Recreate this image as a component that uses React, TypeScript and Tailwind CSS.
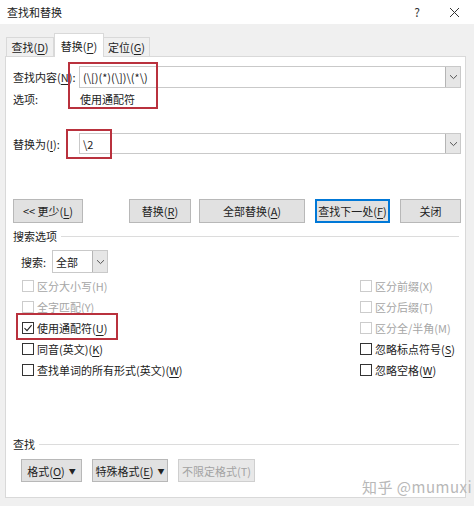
import React from 'react';

const font = { fontFamily: '"Noto Sans CJK SC", "Liberation Sans", sans-serif' };

// access-key letter, underlined like Windows dialogs
const K = ({ c }: { c: string }) => <span className="underline underline-offset-[2px]">{c}</span>;

const Chevron = () => (
   <svg width="9" height="6" viewBox="0 0 9 6" fill="none">
      <path d="M1 1.2 L4.5 4.6 L8 1.2" stroke="#555" strokeWidth="1" />
   </svg>
);

const Combo = ({ value }: { value: string }) => (
   <div className="flex-1 h-full flex items-stretch border border-[#c9c9c9] bg-white">
      <div className="flex-1 flex items-center pl-[3px] text-[#222]">{value}</div>
      <div className="w-[15px] flex items-center justify-center bg-[#e6e6e6] border-l border-[#b5b5b5]">
         <Chevron />
      </div>
   </div>
);

type BtnProps = { children: React.ReactNode; className?: string; disabled?: boolean; primary?: boolean };

const Btn = ({ children, className = '', disabled, primary }: BtnProps) => (
   <div
      className={
         'h-full flex items-center justify-center whitespace-nowrap border ' +
         (primary ? 'bg-[#e1e1e1] border-[#0078d7] shadow-[inset_0_0_0_1px_#0078d7] ' : '') +
         (disabled ? 'text-[#a3a3a3] bg-[#e8e8e8] border-[#cfcfcf] ' : 'text-[#222] ') +
         (!primary && !disabled ? 'bg-[#e1e1e1] border-[#b8b8b8] ' : '') +
         className
      }
   >
      {children}
   </div>
);

const Check = ({ label, checked, disabled }: { label: React.ReactNode; checked?: boolean; disabled?: boolean }) => (
   <div className="h-[21px] flex items-center gap-[3px] whitespace-nowrap">
      <div
         className={
            'w-[12px] h-[12px] border bg-white flex items-center justify-center ' +
            (disabled ? 'border-[#cccccc]' : 'border-[#333]')
         }
      >
         {checked && (
            <svg width="10" height="10" viewBox="0 0 10 10" fill="none">
               <path d="M1.5 5.2 L4 7.6 L8.6 2.2" stroke="#222" strokeWidth="1.1" />
            </svg>
         )}
      </div>
      <span className={disabled ? 'text-[#a6a6a6]' : 'text-[#222]'}>{label}</span>
   </div>
);

const Group = ({ title }: { title: string }) => (
   <div className="h-[16px] flex items-center pl-[7px] pr-[6px] gap-[4px]">
      <span className="text-[#222]">{title}</span>
      <div className="flex-1 h-px bg-[#dcdcdc]" />
   </div>
);

export default function App() {
   return (
      <div style={font} className="relative w-[474px] h-[506px] bg-[#f0f0f0] overflow-hidden text-[11px] leading-[14px]">
         {/* title bar */}
         <div className="h-[24px] bg-white flex items-center pl-[7px]">
            <span className="text-[#222]">查找和替换</span>
            <span className="ml-auto text-[12px] text-[#333] mr-[29px]">?</span>
            <svg width="11" height="11" viewBox="0 0 11 11" className="mr-[14px]">
               <path d="M1 1 L10 10 M10 1 L1 10" stroke="#333" strokeWidth="1" />
            </svg>
         </div>

         {/* tabs */}
         <div className="flex items-end pl-[6px] pt-[8px] h-[32px] whitespace-nowrap">
            <div className="h-[19px] w-[48px] flex items-center justify-center bg-[#f0f0f0] border border-b-0 border-[#d9d9d9] text-[#222]">
               查找(<K c="D" />)
            </div>
            <div className="relative z-10 h-[24px] -mb-px w-[50px] flex items-center justify-center bg-white border border-b-0 border-[#d9d9d9] text-[#222]">
               替换(<K c="P" />)
            </div>
            <div className="h-[19px] w-[46px] flex items-center justify-center bg-[#f0f0f0] border border-b-0 border-l-0 border-[#d9d9d9] text-[#222]">
               定位(<K c="G" />)
            </div>
         </div>

         {/* tab page */}
         <div className="relative ml-[5px] w-[461px] h-[442px] bg-white border border-[#d9d9d9] flex flex-col whitespace-nowrap">
            <div className="mt-[9px] h-[22px] flex items-center pl-[7px] pr-[4px]">
               <span className="w-[66px] text-[#222]">查找内容(<K c="N" />):</span>
               <Combo value={'(\\[)(*)(\\])\\(*\\)'} />
            </div>
            <div className="h-[22px] flex items-center pl-[7px]">
               <span className="w-[67px] text-[#222]">选项:</span>
               <span className="text-[#222]">使用通配符</span>
            </div>
            <div className="mt-[23px] h-[21px] flex items-center pl-[7px] pr-[4px]">
               <span className="w-[66px] text-[#222]">替换为(<K c="I" />):</span>
               <Combo value={'\\2'} />
            </div>

            <div className="mt-[45px] h-[24px] flex pl-[7px]">
               <Btn className="w-[70px]">
                  {'<< 更少('}
                  <K c="L" />)
               </Btn>
               <Btn className="w-[62px] ml-[46px]">
                  替换(<K c="R" />)
               </Btn>
               <Btn className="w-[106px] ml-[8px]">
                  全部替换(<K c="A" />)
               </Btn>
               <Btn primary className="w-[75px] ml-[10px]">
                  查找下一处(<K c="F" />)
               </Btn>
               <Btn className="w-[61px] ml-[10px]">关闭</Btn>
            </div>

            <div className="mt-[5px]">
               <Group title="搜索选项" />
            </div>

            <div className="mt-[6px] h-[23px] flex items-center pl-[15px]">
               <span className="w-[31px] text-[#222]">搜索:</span>
               <div className="w-[56px] h-full flex border border-[#c9c9c9] bg-white">
                  <div className="flex-1 flex items-center pl-[3px] text-[#222]">全部</div>
                  <div className="w-[15px] flex items-center justify-center bg-[#e6e6e6] border-l border-[#b5b5b5]">
                     <Chevron />
                  </div>
               </div>
            </div>

            <div className="mt-[2px] flex pl-[16px]">
               <div className="w-[338px] flex flex-col">
                  <Check disabled label={<>区分大小写(H)</>} />
                  <Check disabled label={<>全字匹配(Y)</>} />
                  <Check checked label={<>使用通配符(<K c="U" />)</>} />
                  <Check label={<>同音(英文)(<K c="K" />)</>} />
                  <Check label={<>查找单词的所有形式(英文)(<K c="W" />)</>} />
               </div>
               <div className="flex flex-col">
                  <Check disabled label={<>区分前缀(X)</>} />
                  <Check disabled label={<>区分后缀(T)</>} />
                  <Check disabled label={<>区分全/半角(M)</>} />
                  <Check label={<>忽略标点符号(<K c="S" />)</>} />
                  <Check label={<>忽略空格(<K c="W" />)</>} />
               </div>
            </div>

            <div className="mt-[56px]">
               <Group title="查找" />
            </div>

            <div className="mt-[7px] h-[23px] flex pl-[15px]">
               <Btn className="w-[61px] gap-[4px]">
                  <span>
                     格式(<K c="O" />)
                  </span>
                  <span className="text-[7px]">▼</span>
               </Btn>
               <Btn className="w-[76px] ml-[10px] gap-[4px]">
                  <span>
                     特殊格式(<K c="E" />)
                  </span>
                  <span className="text-[7px]">▼</span>
               </Btn>
               <Btn disabled className="w-[77px] ml-[10px]">
                  不限定格式(T)
               </Btn>
            </div>

            {/* red annotation frames */}
            <div className="absolute left-[62px] top-[5px] w-[90px] h-[47px] border-2 border-[#b9313d]" />
            <div className="absolute left-[60px] top-[72px] w-[46px] h-[30px] border-2 border-[#b9313d]" />
            <div className="absolute left-[10px] top-[256px] w-[102px] h-[27px] border-2 border-[#b9313d]" />
         </div>

         <div className="absolute left-[362px] top-[477px] text-[15px] leading-[20px] text-[#b8b8b8] tracking-[0.5px]">知乎 @mumuxi</div>
      </div>
   );
}
